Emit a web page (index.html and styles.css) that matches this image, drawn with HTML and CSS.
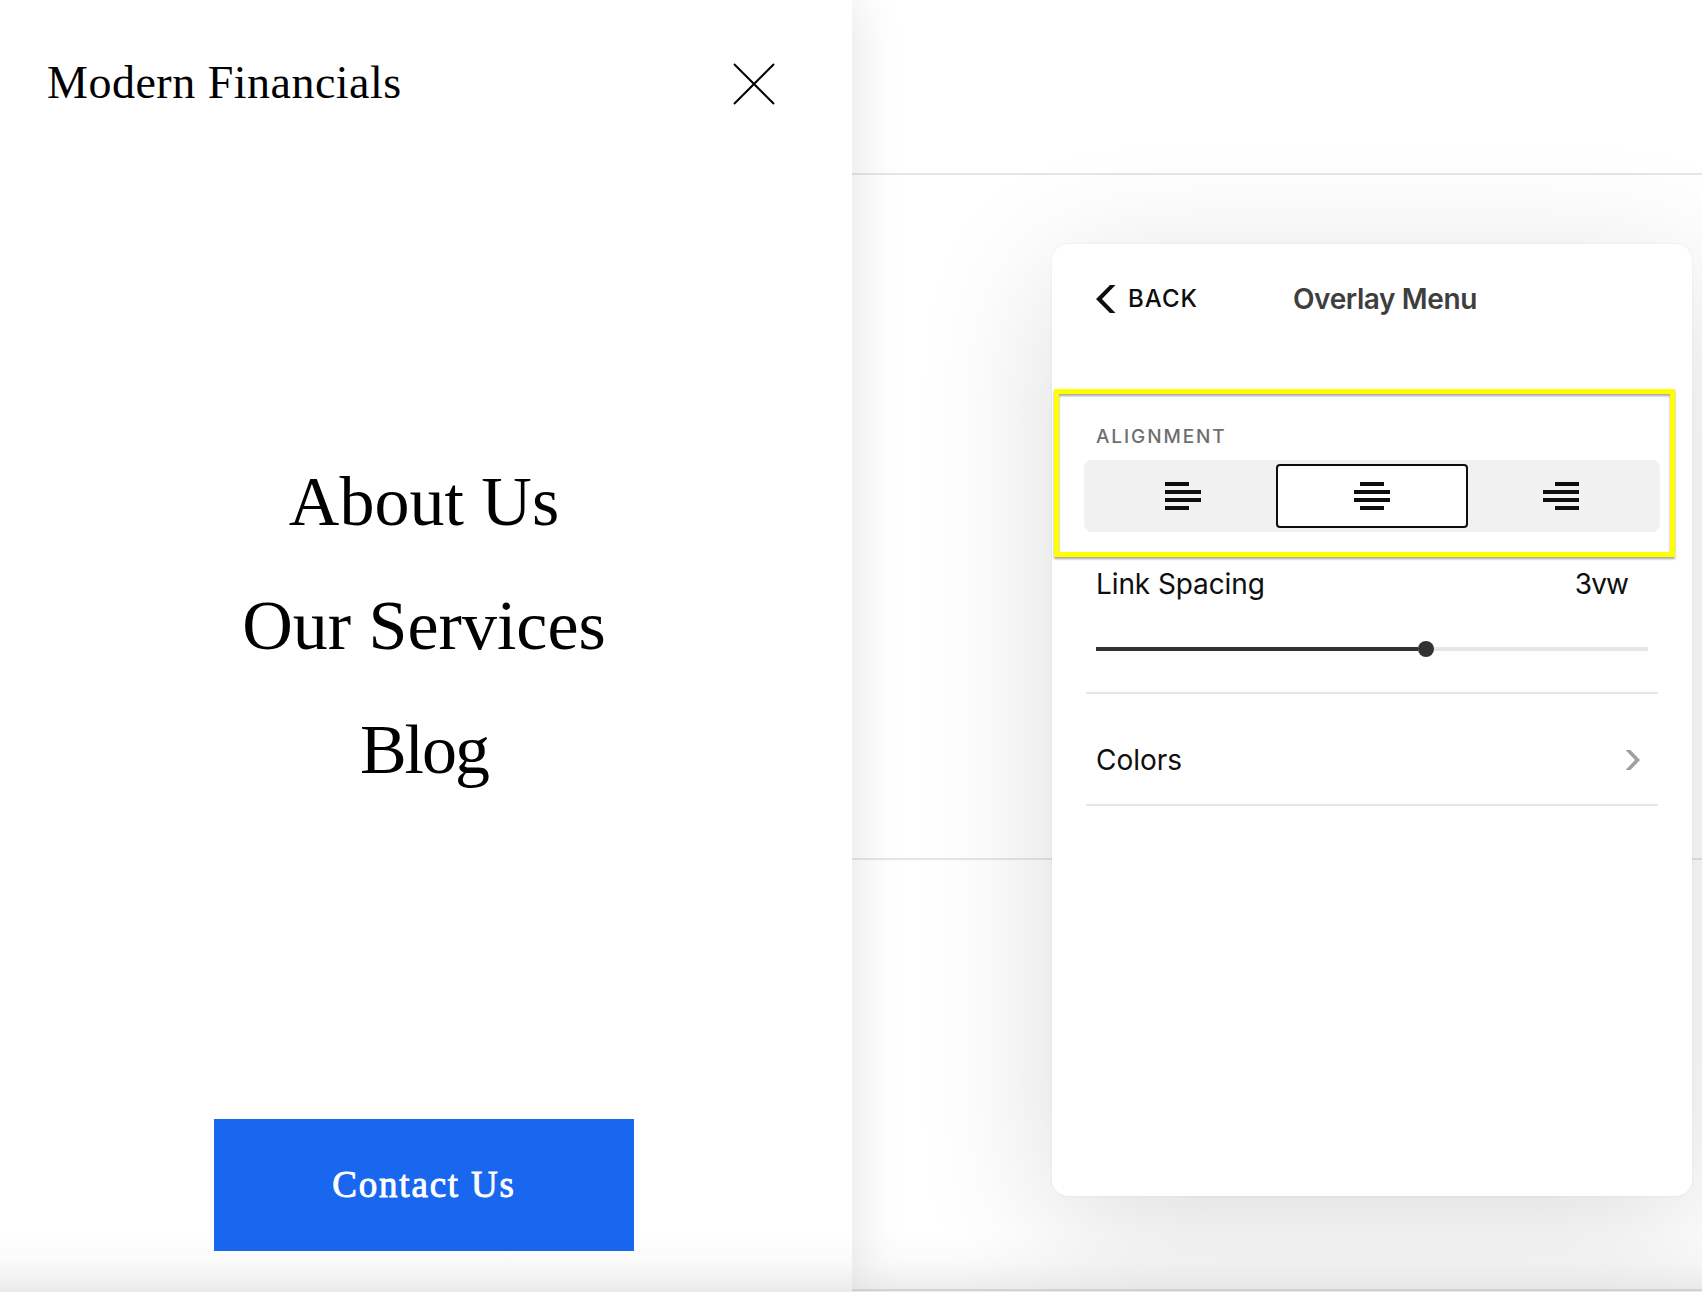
FILE: index.html
```html
<!DOCTYPE html>
<html lang="en">

<head>
    <meta charset="UTF-8">
    <meta name="viewport" content="width=device-width, initial-scale=1.0">
    <title>Modern Financials</title>
    <link rel="stylesheet" href="styles.css">
</head>

<body>

    <div class="overlay-menu">
        <header class="menu-header">
            <div class="site-title">Modern Financials</div>
            <svg class="close-icon" width="42" height="42" viewBox="0 0 42 42">
                <path d="M1 1L41 41M41 1L1 41" fill="none" stroke="#000" stroke-width="2" />
            </svg>
        </header>
        <nav class="menu-links">
            <a class="link-about">About Us</a>
            <a class="link-services">Our Services</a>
            <a class="link-blog">Blog</a>
        </nav>
        <a class="contact-button">Contact Us</a>
    </div>

    <main class="page">
        <section class="page-top"></section>
        <section class="page-middle"></section>
        <section class="page-bottom"></section>

        <div class="settings-card">
            <div class="card-header">
                <svg class="back-icon" width="20" height="28" viewBox="0 0 20 28">
                    <path d="M14 0H19.5L6 14L19.5 28H14L0 14Z" fill="#0e0e0e" />
                </svg>
                <span class="back-text">BACK</span>
                <span class="card-title">Overlay Menu</span>
            </div>

            <div class="alignment">
                <div class="alignment-label">ALIGNMENT</div>
                <div class="segments">
                    <div class="segment">
                        <svg width="36" height="28" viewBox="0 0 36 28">
                            <path d="M0 0H24V4H0ZM0 8H36V12H0ZM0 16H36V20H0ZM0 24H24V28H0Z" fill="#0e0e0e" />
                        </svg>
                    </div>
                    <div class="segment selected">
                        <svg width="36" height="28" viewBox="0 0 36 28">
                            <path d="M6 0H30V4H6ZM0 8H36V12H0ZM0 16H36V20H0ZM6 24H30V28H6Z" fill="#0e0e0e" />
                        </svg>
                    </div>
                    <div class="segment">
                        <svg width="36" height="28" viewBox="0 0 36 28">
                            <path d="M12 0H36V4H12ZM0 8H36V12H0ZM0 16H36V20H0ZM12 24H36V28H12Z" fill="#0e0e0e" />
                        </svg>
                    </div>
                </div>
            </div>

            <div class="spacing">
                <div class="spacing-row">
                    <span class="spacing-label">Link Spacing</span>
                    <span class="spacing-value">3vw</span>
                </div>
                <div class="slider">
                    <div class="slider-fill"></div>
                    <div class="slider-thumb"></div>
                    <div class="slider-rest"></div>
                </div>
            </div>

            <div class="colors-row">
                <span class="colors-label">Colors</span>
                <svg width="16" height="20" viewBox="0 0 16 20">
                    <path d="M0.5 0H5.5L15 10L5.5 20H0.5L10 10Z" fill="#a0a0a0" />
                </svg>
            </div>

            <div class="highlight"></div>
        </div>
    </main>

    <div class="bottom-fade"></div>

</body>

</html>
```
FILE: styles.css
```css
* {
    box-sizing: border-box;
}

body {
    margin: 0;
    display: flex;
    height: 1292px;
    position: relative;
    overflow: hidden;
    background-color: #fff;
    font-family: Inter, "Liberation Sans", sans-serif;
    color: #0e0e0e;
}

/* Menu on the left */
.overlay-menu {
    position: relative;
    z-index: 1;
    width: 852px;
    height: 1292px;
    display: flex;
    flex-direction: column;
    background-color: #fff;
    box-shadow: 0 0 50px rgba(0, 0, 0, 0.12);
    font-family: "Liberation Serif", serif;
    color: #000;
}

.menu-header {
    height: 168px;
    padding: 0 77px 0 47px;
    display: flex;
    justify-content: space-between;
    align-items: center;
}

.site-title {
    font-size: 46px;
    line-height: 60px;
    letter-spacing: 0.5px;
    margin-bottom: 3px;
}

.menu-links {
    height: 951px;
    padding-top: 272px;
    padding-right: 4px;
    display: flex;
    flex-direction: column;
    align-items: center;
}

.menu-links a {
    font-size: 70px;
    line-height: 124px;
}

.menu-links .link-blog {
    letter-spacing: -2px;
}

.contact-button {
    width: 420px;
    height: 132px;
    margin-left: 214px;
    background-color: #1966ef;
    color: #fff;
    font-size: 37px;
    line-height: 131px;
    letter-spacing: 1.8px;
    text-align: center;
    -webkit-text-stroke: 0.9px #fff;
}

/* Page behind the menu */
.page {
    position: relative;
    flex: 1;
}

.page section {
    border-bottom: 2px solid #e6e6e6;
}

.page-top {
    height: 175px;
}

.page-middle {
    height: 685px;
}

.page-bottom {
    height: 431px;
}

/* Settings card */
.settings-card {
    position: absolute;
    left: 200px;
    top: 244px;
    width: 640px;
    height: 952px;
    padding: 0 32px;
    border-radius: 16px;
    background-color: #fff;
    box-shadow: 0 0 2px rgba(0, 0, 0, 0.1), 0 30px 140px rgba(0, 0, 0, 0.14);
}

.card-header {
    height: 110px;
    padding-left: 12px;
    display: flex;
    align-items: center;
}

.back-text {
    width: 165px;
    margin-left: 12px;
    margin-bottom: 2px;
    font-size: 24px;
    font-weight: 500;
    letter-spacing: 1px;
}

.card-title {
    font-size: 28px;
    font-weight: 600;
    letter-spacing: -0.4px;
    color: #3e3e3e;
}

.alignment {
    padding-top: 70px;
}

.alignment-label {
    height: 36px;
    padding-left: 12px;
    font-size: 19px;
    line-height: 25px;
    font-weight: 500;
    letter-spacing: 1.9px;
    color: #6e6e6e;
}

.segments {
    display: flex;
    height: 72px;
    padding: 4px 5px;
    border-radius: 8px;
    background-color: #f1f1f1;
}

.segment {
    flex: 1;
    display: flex;
    justify-content: center;
    align-items: center;
}

.selected {
    border: 2px solid #0e0e0e;
    border-radius: 4px;
    background-color: #fff;
}

.spacing {
    height: 162px;
    margin: 0 2px;
    padding: 32px 10px 0;
    border-bottom: 2px solid #e6e6e6;
}

.spacing-row {
    display: flex;
    justify-content: space-between;
    padding-right: 20px;
    font-size: 28px;
    line-height: 40px;
}

.spacing-label {
    letter-spacing: -0.1px;
}

.spacing-value {
    letter-spacing: -0.9px;
}

.slider {
    display: flex;
    align-items: center;
    height: 16px;
    margin-top: 37px;
}

.slider-fill {
    width: 322px;
    height: 4px;
    background-color: #323232;
}

.slider-thumb {
    width: 16px;
    height: 16px;
    border-radius: 50%;
    background-color: #323232;
}

.slider-rest {
    flex: 1;
    height: 4px;
    background-color: #e6e6e6;
}

.colors-row {
    display: flex;
    justify-content: space-between;
    align-items: center;
    height: 112px;
    margin: 0 2px;
    padding: 22px 17px 0 10px;
    border-bottom: 2px solid #e6e6e6;
    font-size: 28px;
}

.highlight {
    position: absolute;
    left: 2px;
    top: 145px;
    width: 621px;
    height: 168px;
    border: 5px solid #ffff00;
    filter: drop-shadow(0 2px 1px rgba(0, 0, 0, 0.35));
}

/* Shade along the bottom edge */
.bottom-fade {
    position: absolute;
    z-index: 2;
    left: 0;
    right: 0;
    bottom: 0;
    height: 60px;
    background: linear-gradient(rgba(0, 0, 0, 0), rgba(0, 0, 0, 0.02) 50%, rgba(0, 0, 0, 0.08));
}
```
